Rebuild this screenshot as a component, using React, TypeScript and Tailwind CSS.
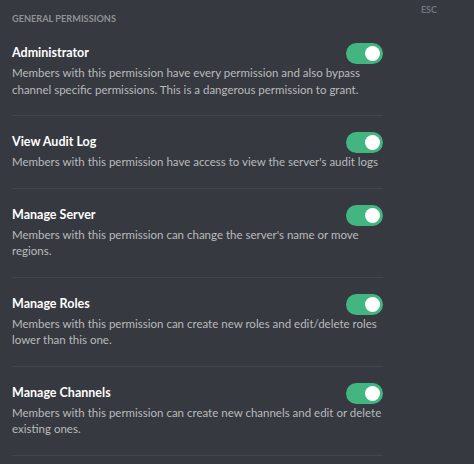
import React from 'react';

type Permission = {
  name: string;
  description: string;
};

const permissions: Permission[] = [
  {
    name: 'Administrator',
    description:
      'Members with this permission have every permission and also bypass channel specific permissions. This is a dangerous permission to grant.',
  },
  {
    name: 'View Audit Log',
    description: "Members with this permission have access to view the server's audit logs",
  },
  {
    name: 'Manage Server',
    description: "Members with this permission can change the server's name or move regions.",
  },
  {
    name: 'Manage Roles',
    description: 'Members with this permission can create new roles and edit/delete roles lower than this one.',
  },
  {
    name: 'Manage Channels',
    description: 'Members with this permission can create new channels and edit or delete existing ones.',
  },
];

function Toggle() {
  return (
    <div className="flex items-center justify-end w-[37px] h-[21px] rounded-full bg-[#43b581] px-[3px] shrink-0">
      <div className="w-[15px] h-[15px] rounded-full bg-white" />
    </div>
  );
}

export default function App() {
  return (
    <div className="relative w-[474px] h-[464px] overflow-hidden bg-[#36393f] font-['Lato',sans-serif]">
      <div className="absolute right-[37px] top-[3px] text-[9px] font-bold text-[#72767d]">ESC</div>
      <div className="w-[383px] pl-[12px] pt-[13px]">
        <h2 className="text-[9.2px] font-bold uppercase text-[#8e9297] leading-[12px]">General Permissions</h2>
        <div className="mt-[18px]">
          {permissions.map((p) => (
            <div key={p.name} className="border-b border-[#42454a] pb-[17px] mb-[16px]">
              <div className="flex items-center justify-between h-[21px]">
                <span className="text-[12.5px] font-bold text-white">{p.name}</span>
                <Toggle />
              </div>
              <p className="mt-[1px] text-[11.5px] leading-[16.5px] text-[#b9bbbe]">{p.description}</p>
            </div>
          ))}
        </div>
      </div>
    </div>
  );
}
